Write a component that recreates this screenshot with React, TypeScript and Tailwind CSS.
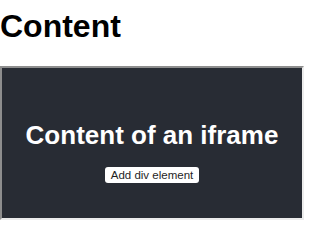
export default function App() {
  return (
    <div className="w-[330px] h-[252px] bg-white" style={{ fontFamily: '"Liberation Sans", Arial, sans-serif' }}>
      <h1 className="pt-[8px] text-[32px] leading-[37px] font-bold text-black">Content</h1>

      {/* iframe-like frame: 300x150 with inset border */}
      <div className="mt-[21px] w-[304px] h-[154px] border-2 border-t-[#8e8e8e] border-l-[#8e8e8e] border-r-[#ececec] border-b-[#ececec]">
        <div className="w-[300px] h-[150px] bg-[#282c34] flex flex-col items-center pt-[52px]">
          <h2 className="text-[26px] leading-[30px] font-bold text-white whitespace-nowrap">Content of an iframe</h2>
          <button className="mt-[17px] h-[16px] px-[6px] bg-white rounded-[3px] text-[11.5px] leading-[16px] text-[#1f1f1f]">
            Add div element
          </button>
        </div>
      </div>
    </div>
  )
}
